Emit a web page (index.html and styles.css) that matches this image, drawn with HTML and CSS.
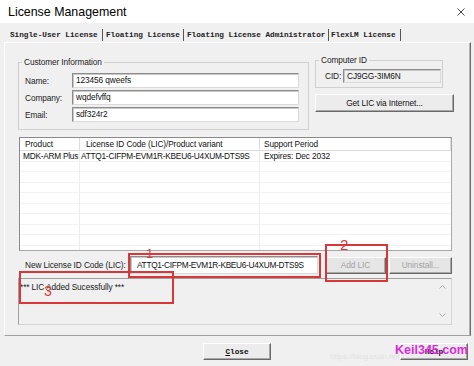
FILE: index.html
```html
<!DOCTYPE html>
<html>
<head>
<meta charset="utf-8">
<link rel="stylesheet" href="styles.css">
</head>
<body>
<div class="window">
  <header class="titlebar">
    <span class="title">License Management</span>
    <svg class="close-x" width="8" height="8" viewBox="0 0 8 8"><path d="M0.5 0.5L7.5 7.5M7.5 0.5L0.5 7.5" stroke="#333" stroke-width="0.9" fill="none"/></svg>
  </header>
  <nav class="tabs">
    <span class="tab tab-1">Single-User License</span>
    <span class="tab tab-2">Floating License</span>
    <span class="tab tab-3">Floating License Administrator</span>
    <span class="tab tab-4">FlexLM License</span>
  </nav>
  <section class="panel">
    <div class="top-row">
      <fieldset class="group group-customer">
        <legend class="legend legend-customer">Customer Information</legend>
        <div class="form-grid">
          <span class="label">Name:</span><div class="input">123456 qweefs</div>
          <span class="label">Company:</span><div class="input">wqdefvffq</div>
          <span class="label">Email:</span><div class="input">sdf324r2</div>
        </div>
      </fieldset>
      <div class="right-col">
        <fieldset class="group group-cid">
          <legend class="legend legend-cid">Computer ID</legend>
          <div class="cid-row">
            <span class="label">CID:</span><div class="input input-ro">CJ9GG-3IM6N</div>
          </div>
        </fieldset>
        <button class="btn btn-internet">Get LIC via Internet...</button>
      </div>
    </div>
    <div class="list">
      <div class="list-row list-head">
        <span class="cell cell-1">Product</span><span class="cell cell-2">License ID Code (LIC)/Product variant</span><span class="cell cell-3">Support Period</span>
      </div>
      <div class="list-row list-item">
        <span class="cell cell-1">MDK-ARM Plus</span><span class="cell cell-2">ATTQ1-CIFPM-EVM1R-KBEU6-U4XUM-DTS9S</span><span class="cell cell-3">Expires: Dec 2032</span>
      </div>
      <div class="list-row list-item"><span class="cell cell-1"></span><span class="cell cell-2"></span><span class="cell cell-3"></span></div>
      <div class="list-row list-item"><span class="cell cell-1"></span><span class="cell cell-2"></span><span class="cell cell-3"></span></div>
      <div class="list-row list-item"><span class="cell cell-1"></span><span class="cell cell-2"></span><span class="cell cell-3"></span></div>
      <div class="list-row list-item"><span class="cell cell-1"></span><span class="cell cell-2"></span><span class="cell cell-3"></span></div>
      <div class="list-row list-item"><span class="cell cell-1"></span><span class="cell cell-2"></span><span class="cell cell-3"></span></div>
      <div class="list-row list-item"><span class="cell cell-1"></span><span class="cell cell-2"></span><span class="cell cell-3"></span></div>
      <div class="list-row list-item"><span class="cell cell-1"></span><span class="cell cell-2"></span><span class="cell cell-3"></span></div>
      <div class="list-row list-item"><span class="cell cell-1"></span><span class="cell cell-2"></span><span class="cell cell-3"></span></div>
      <div class="list-row list-item"><span class="cell cell-1"></span><span class="cell cell-2"></span><span class="cell cell-3"></span></div>
    </div>
    <div class="lic-row">
      <span class="label lic-label">New License ID Code (LIC):</span>
      <div class="input input-lic">ATTQ1-CIFPM-EVM1R-KBEU6-U4XUM-DTS9S</div>
      <button class="btn btn-disabled btn-add">Add LIC</button>
      <button class="btn btn-disabled btn-uninstall">Uninstall...</button>
    </div>
    <div class="output">
      <div class="output-text">*** LIC Added Sucessfully ***</div>
      <div class="scrollbar">
        <svg width="7" height="4" viewBox="0 0 7 4"><path d="M0.5 3.5L3.5 0.5L6.5 3.5" stroke="#a8a8a8" stroke-width="1" fill="none"/></svg>
        <svg width="7" height="4" viewBox="0 0 7 4"><path d="M0.5 0.5L3.5 3.5L6.5 0.5" stroke="#a8a8a8" stroke-width="1" fill="none"/></svg>
      </div>
    </div>
  </section>
  <footer class="footer">
    <button class="btn btn-foot btn-close"><u>C</u>lose</button>
    <button class="btn btn-foot btn-help">Help</button>
  </footer>

  <div class="mark mark-1"></div>
  <div class="mark mark-2"></div>
  <div class="mark mark-3"></div>
  <span class="mark-num num-1">1</span>
  <span class="mark-num num-2">2</span>
  <span class="mark-num num-3">3</span>
  <span class="faint">https://blog.csdn.net</span>
  <span class="watermark">Keil345.com</span>
</div>
</body>
</html>
```
FILE: styles.css
```css
* { box-sizing: border-box; }

body {
  margin: 0;
  width: 474px;
  height: 366px;
  overflow: hidden;
  background: #f0f0f0;
  font-family: "Liberation Sans", Arial, sans-serif;
  font-size: 8.3px;
  letter-spacing: -0.1px;
  color: #111;
}

.window {
  position: relative;
  width: 474px;
  height: 366px;
}

.titlebar {
  height: 23px;
  background: #ffffff;
  display: flex;
  align-items: center;
  justify-content: space-between;
  padding: 0 9px 0 8px;
}

.title {
  font-size: 12.4px;
  letter-spacing: 0;
  color: #000;
}

.close-x { display: block; }

.tabs {
  height: 19px;
  display: flex;
  padding: 6px 0 0 6px;
  font-family: "Liberation Mono", "Courier New", monospace;
  font-weight: bold;
  font-size: 7.7px;
  letter-spacing: 0;
  color: #222;
}

.tab {
  height: 12px;
  line-height: 12px;
  border-right: 1px solid #555;
  white-space: nowrap;
  overflow: hidden;
}

.tab-1 { width: 97px; padding-left: 4px; }
.tab-2 { width: 81px; padding-left: 3px; }
.tab-3 { width: 145px; padding-left: 3px; }
.tab-4 { width: 72px; padding-left: 2px; }

.panel {
  margin-left: 4px;
  width: 467px;
  height: 294px;
  border-top: 1px solid #ffffff;
  border-left: 1px solid #ffffff;
  border-right: 1px solid #6a6a6a;
  border-bottom: 1px solid #a0a0a0;
  box-shadow: inset -1px 0 0 #b4b4b4;
  padding: 14px 0 0 13px;
}

.top-row {
  display: flex;
  align-items: flex-start;
}

.group {
  margin: 0;
  border: 1px solid #d0d0d0;
  min-width: 0;
}

.legend {
  padding: 0 2px;
  line-height: 10px;
  color: #222;
}

.group-customer {
  width: 291px;
  padding: 6px 9px 7px 6px;
}

.legend-customer { margin-left: -3px; }

.form-grid {
  display: grid;
  grid-template-columns: 47px 227px;
  grid-auto-rows: 15px;
  row-gap: 2px;
  align-items: center;
}

.label {
  color: #222;
  white-space: nowrap;
}

.input {
  height: 15px;
  line-height: 13px;
  padding: 0 3px;
  background: #ffffff;
  border: 1px solid;
  border-color: #8c8c8c #dadada #dadada #8c8c8c;
  box-shadow: inset 1px 1px 0 #c8c8c8;
  white-space: nowrap;
  overflow: hidden;
  color: #111;
}

.right-col {
  width: 139px;
  margin-left: 6px;
  margin-top: -2px;
  display: flex;
  flex-direction: column;
}

.group-cid {
  width: 128px;
  padding: 4px 1px 4px 9px;
}

.legend-cid { margin-left: -6px; }

.cid-row {
  display: grid;
  grid-template-columns: 18px 98px;
  align-items: center;
}

.input-ro {
  height: 14px;
  line-height: 12px;
  background: #f0f0f0;
}

.btn {
  height: 17px;
  padding: 0;
  margin: 0;
  font: inherit;
  letter-spacing: inherit;
  color: #111;
  background: #ececec;
  border: 1px solid;
  border-color: #ffffff #696969 #696969 #ffffff;
  box-shadow: inset -1px -1px 0 #a8a8a8;
}

.btn-internet {
  margin-top: 6px;
  width: 139px;
  height: 18px;
}

.list {
  margin: 7px 0 0 1px;
  width: 433px;
  height: 114px;
  background: #ffffff;
  border: 1px solid;
  border-color: #8a8a8a #a8a8a8 #a8a8a8 #8a8a8a;
  overflow: hidden;
}

.list-row {
  display: grid;
  grid-template-columns: 60px 180px 191px;
}

.cell {
  white-space: nowrap;
  overflow: hidden;
  border-right: 1px solid #ececec;
  color: #111;
}

.list-head {
  height: 13px;
  line-height: 12px;
  border-bottom: 1px solid #dcdcdc;
}

.list-head .cell { border-right-color: #dcdcdc; }
.list-head .cell-1 { padding-left: 5px; }
.list-head .cell-2 { padding-left: 6px; }
.list-head .cell-3 { padding-left: 4px; }

.list-item {
  height: 10.5px;
  line-height: 10px;
  border-bottom: 1px solid #f1f1f1;
  letter-spacing: -0.25px;
}

.list-item .cell-1 { padding-left: 3px; }
.list-item .cell-2 { padding-left: 1px; }
.list-item .cell-3 { padding-left: 4px; border-right: none; letter-spacing: -0.1px; }

.lic-row {
  margin-top: 5px;
  display: flex;
  align-items: center;
  height: 18px;
  padding-left: 7px;
}

.lic-label { width: 105px; }

.input-lic {
  width: 188px;
  height: 18px;
  line-height: 16px;
  padding-left: 6px;
  letter-spacing: -0.3px;
}

.btn-disabled { color: #a3a3a3; background: #e6e6e6; }

.btn-add { width: 61px; margin-left: 7px; }
.btn-uninstall { width: 63px; margin-left: 3px; }

.output {
  margin-top: 4px;
  width: 434px;
  height: 47px;
  display: flex;
  border: 1px solid;
  border-color: #a0a0a0 #d4d4d4 #d4d4d4 #a0a0a0;
  background: #f0f0f0;
}

.output-text {
  flex: 1;
  padding: 3px 0 0 1px;
  line-height: 10px;
  color: #222;
}

.scrollbar {
  width: 17px;
  display: flex;
  flex-direction: column;
  align-items: center;
  justify-content: space-between;
  padding: 6px 0 7px;
}

.scrollbar svg { display: block; }

.footer {
  display: grid;
  grid-template-columns: 1fr auto 1fr;
  padding-top: 7px;
}

.btn-foot {
  width: 68px;
  height: 17px;
  font-family: "Liberation Mono", "Courier New", monospace;
  font-weight: bold;
  font-size: 7.7px;
  letter-spacing: 0;
}

.btn-close { grid-column: 2; }
.btn-help { grid-column: 3; justify-self: end; margin-right: 6px; }

.mark {
  position: absolute;
  border: 2px solid #d9383a;
}

.mark-1 { left: 128px; top: 253px; width: 193px; height: 25px; }
.mark-2 { left: 325px; top: 244px; width: 63px; height: 38px; }
.mark-3 { left: 19px; top: 271px; width: 155px; height: 33px; }

.mark-num {
  position: absolute;
  color: #d9383a;
  line-height: 1;
  letter-spacing: 0;
  font-family: "Liberation Sans", Arial, sans-serif;
}

.num-1 { left: 146px; top: 247px; font-size: 13px; }
.num-2 { left: 340px; top: 237px; font-size: 15px; }
.num-3 { left: 44px; top: 284px; font-size: 14px; }

.faint {
  position: absolute;
  left: 330px;
  top: 352px;
  font-size: 8px;
  color: #e2e2e2;
}

.watermark {
  position: absolute;
  left: 395px;
  top: 344px;
  font-size: 12.5px;
  font-weight: bold;
  letter-spacing: 0;
  color: #d92cd9;
  line-height: 1;
}
```
